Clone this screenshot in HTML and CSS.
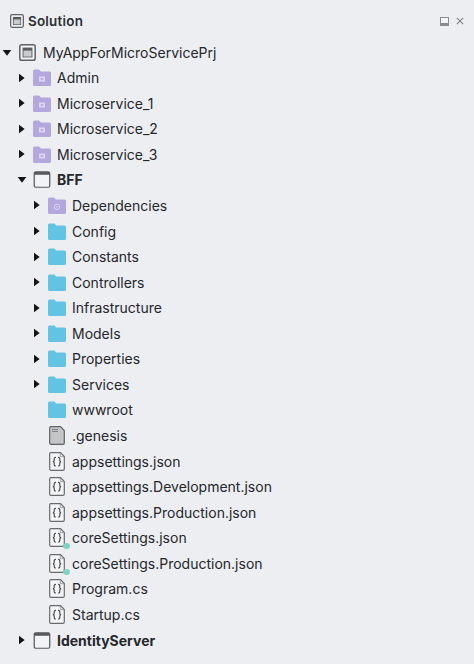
FILE: index.html
```html
<!DOCTYPE html>
<html lang="en">
<head>
<meta charset="utf-8">
<title>Solution</title>
<link rel="stylesheet" href="styles.css">
</head>
<body>
<svg class="defs" width="0" height="0" aria-hidden="true">
  <defs>
    <symbol id="arrow-r" viewBox="0 0 8 12"><path d="M1 .8 L7.8 6 L1 11.2 Z" fill="#151515"/></symbol>
    <symbol id="arrow-d" viewBox="0 0 12 8"><path d="M.8 1 L11.2 1 L6 7.8 Z" fill="#151515"/></symbol>
    <symbol id="solution" viewBox="0 0 17 17"><rect x=".8" y=".8" width="15.4" height="15.4" rx="1.8" fill="#eef0f3" stroke="#626264" stroke-width="1.5"/><rect x="3.6" y="3.6" width="9.8" height="9.8" fill="#5c5c5e"/><rect x="4.5" y="6.6" width="8" height="6" fill="#c8c9cb"/></symbol>
    <symbol id="project" viewBox="0 0 18 18"><rect x=".8" y=".8" width="16.4" height="16.4" rx="1.6" fill="#f2f3f5" stroke="#59595b" stroke-width="1.3"/><rect x="1" y="1" width="16" height="3" fill="#59595b"/></symbol>
    <symbol id="folder-p" viewBox="0 0 18 17"><path d="M0 2 Q0 0.5 1.5 0.5 H6 L8 2.5 H16.5 Q18 2.5 18 4 V15.5 Q18 17 16.5 17 H1.5 Q0 17 0 15.5 Z" fill="#b3a7dd"/><rect x="6" y="7.5" width="6" height="5" fill="#dcd6f0"/><rect x="7.5" y="9.4" width="3" height="1.1" fill="#a598d6"/></symbol>
    <symbol id="folder-dep" viewBox="0 0 18 17"><path d="M0 2 Q0 0.5 1.5 0.5 H6 L8 2.5 H16.5 Q18 2.5 18 4 V15.5 Q18 17 16.5 17 H1.5 Q0 17 0 15.5 Z" fill="#b3a7dd"/><circle cx="9" cy="9.8" r="2.7" fill="none" stroke="#dcd6f0" stroke-width="1"/><circle cx="9" cy="9.8" r=".8" fill="#dcd6f0"/></symbol>
    <symbol id="folder-b" viewBox="0 0 18 17"><path d="M0 2 Q0 0.5 1.5 0.5 H6.5 L8 2.5 H16.5 Q18 2.5 18 4 V15.5 Q18 17 16.5 17 H1.5 Q0 17 0 15.5 Z" fill="#63c3e2"/></symbol>
    <symbol id="file-code" viewBox="0 0 16 19"><path d="M1.8 .7 H11.5 L15.3 4.5 V17 Q15.3 18.3 14 18.3 H2 Q.7 18.3 .7 17 V2 Q.7 .7 1.8 .7 Z" fill="#f4f5f7" stroke="#6a6a6c" stroke-width="1.2"/><path d="M11.3 .9 V4.7 H15" fill="none" stroke="#8d8d90" stroke-width=".8"/><path d="M6.9 5.4 Q5 5.4 5.2 7.3 V8.5 Q5.2 9.5 3.9 9.7 Q5.2 9.9 5.2 10.9 V12.1 Q5 14 6.9 14 M9.1 5.4 Q11 5.4 10.8 7.3 V8.5 Q10.8 9.5 12.1 9.7 Q10.8 9.9 10.8 10.9 V12.1 Q11 14 9.1 14" fill="none" stroke="#3f3f41" stroke-width="1.1"/></symbol>
    <symbol id="file-text" viewBox="0 0 16 19"><path d="M1.8 .7 H11.5 L15.3 4.5 V17 Q15.3 18.3 14 18.3 H2 Q.7 18.3 .7 17 V2 Q.7 .7 1.8 .7 Z" fill="#c4c5c7" stroke="#626264" stroke-width="1.2"/><path d="M3 3.5 H9 M3 5.5 H9" stroke="#707073" stroke-width=".8"/></symbol>
  </defs>
</svg>
<main class="panel">
  <header class="title-bar">
    <span class="title-left">
      <svg class="ic-title"><use href="#solution"/></svg>
      <span class="title">Solution</span>
    </span>
    <span class="title-actions">
      <svg class="ic-min" viewBox="0 0 9 9"><rect x=".5" y=".5" width="8" height="8" fill="#f3f4f6" stroke="#8a8b8e"/><rect x=".5" y="6" width="8" height="2.5" fill="#8a8b8e"/></svg>
      <svg class="ic-close" viewBox="0 0 8 8"><path d="M.8 .8 L7.2 7.2 M7.2 .8 L.8 7.2" stroke="#85868a" stroke-width="1.2"/></svg>
    </span>
  </header>
  <ul class="tree">
    <li class="row l0"><svg class="tw-d"><use href="#arrow-d"/></svg><svg class="ic ic-sln"><use href="#solution"/></svg><span>MyAppForMicroServicePrj</span></li>
    <li class="row l1"><svg class="tw"><use href="#arrow-r"/></svg><svg class="ic"><use href="#folder-p"/></svg><span>Admin</span></li>
    <li class="row l1"><svg class="tw"><use href="#arrow-r"/></svg><svg class="ic"><use href="#folder-p"/></svg><span>Microservice_1</span></li>
    <li class="row l1"><svg class="tw"><use href="#arrow-r"/></svg><svg class="ic"><use href="#folder-p"/></svg><span>Microservice_2</span></li>
    <li class="row l1"><svg class="tw"><use href="#arrow-r"/></svg><svg class="ic"><use href="#folder-p"/></svg><span>Microservice_3</span></li>
    <li class="row l1 bold"><svg class="tw-d"><use href="#arrow-d"/></svg><svg class="ic"><use href="#project"/></svg><span>BFF</span></li>
    <li class="row l2"><svg class="tw"><use href="#arrow-r"/></svg><svg class="ic"><use href="#folder-dep"/></svg><span>Dependencies</span></li>
    <li class="row l2"><svg class="tw"><use href="#arrow-r"/></svg><svg class="ic"><use href="#folder-b"/></svg><span>Config</span></li>
    <li class="row l2"><svg class="tw"><use href="#arrow-r"/></svg><svg class="ic"><use href="#folder-b"/></svg><span>Constants</span></li>
    <li class="row l2"><svg class="tw"><use href="#arrow-r"/></svg><svg class="ic"><use href="#folder-b"/></svg><span>Controllers</span></li>
    <li class="row l2"><svg class="tw"><use href="#arrow-r"/></svg><svg class="ic"><use href="#folder-b"/></svg><span>Infrastructure</span></li>
    <li class="row l2"><svg class="tw"><use href="#arrow-r"/></svg><svg class="ic"><use href="#folder-b"/></svg><span>Models</span></li>
    <li class="row l2"><svg class="tw"><use href="#arrow-r"/></svg><svg class="ic"><use href="#folder-b"/></svg><span>Properties</span></li>
    <li class="row l2"><svg class="tw"><use href="#arrow-r"/></svg><svg class="ic"><use href="#folder-b"/></svg><span>Services</span></li>
    <li class="row l2"><i class="tw-gap"></i><svg class="ic"><use href="#folder-b"/></svg><span>wwwroot</span></li>
    <li class="row l2"><i class="tw-gap"></i><svg class="ic ic-file"><use href="#file-text"/></svg><span>.genesis</span></li>
    <li class="row l2"><i class="tw-gap"></i><svg class="ic ic-file"><use href="#file-code"/></svg><span>appsettings.json</span></li>
    <li class="row l2"><i class="tw-gap"></i><svg class="ic ic-file"><use href="#file-code"/></svg><span>appsettings.Development.json</span></li>
    <li class="row l2"><i class="tw-gap"></i><svg class="ic ic-file"><use href="#file-code"/></svg><span>appsettings.Production.json</span></li>
    <li class="row l2"><i class="tw-gap"></i><span class="badged"><svg class="ic ic-file"><use href="#file-code"/></svg><i class="badge"></i></span><span>coreSettings.json</span></li>
    <li class="row l2"><i class="tw-gap"></i><span class="badged"><svg class="ic ic-file"><use href="#file-code"/></svg><i class="badge"></i></span><span>coreSettings.Production.json</span></li>
    <li class="row l2"><i class="tw-gap"></i><svg class="ic ic-file"><use href="#file-code"/></svg><span>Program.cs</span></li>
    <li class="row l2"><i class="tw-gap"></i><svg class="ic ic-file"><use href="#file-code"/></svg><span>Startup.cs</span></li>
    <li class="row l1 bold"><svg class="tw"><use href="#arrow-r"/></svg><svg class="ic"><use href="#project"/></svg><span>IdentityServer</span></li>
  </ul>
</main>
</body>
</html>
```
FILE: styles.css
```css
* { box-sizing: border-box; }
html, body { margin: 0; height: 100%; }
body {
  background: #eceef2;
  color: #26272a;
  font-family: Inter, "Liberation Sans", sans-serif;
  overflow: hidden;
}
.defs { position: absolute; }
.panel { width: 474px; height: 664px; display: flex; flex-direction: column; }
.title-bar {
  height: 39.3px;
  padding: 3px 10px 0 10px;
  display: flex;
  align-items: center;
  justify-content: space-between;
}
.title-left { display: flex; align-items: center; gap: 4px; }
.ic-title { width: 14px; height: 14px; }
.title { font-size: 13.4px; font-weight: 600; letter-spacing: .25px; color: #2e2f32; }
.title-actions { display: flex; align-items: center; gap: 7px; margin-top: 0; }
.ic-min { width: 9px; height: 9px; }
.ic-close { width: 8px; height: 8px; }
.tree { list-style: none; margin: 0; padding: 0; }
.row {
  height: 25.57px;
  display: flex;
  align-items: center;
  font-size: 14px;
  white-space: nowrap;
}
.l0 { padding-left: 3px; }
.l1 { padding-left: 18px; }
.l2 { padding-left: 33px; }
.bold { font-weight: 700; }
.tw { width: 7px; height: 10px; margin-right: 8px; flex: none; }
.tw-d { width: 10px; height: 7px; margin-right: 6px; margin-left: -1px; flex: none; }
.tw-gap { width: 7px; margin-right: 8px; flex: none; }
.ic { width: 18px; height: 17px; margin-right: 6px; flex: none; }
.ic-sln { width: 17px; height: 17px; margin-right: 7px; margin-left: 1px; }
.ic-file { width: 16px; height: 19px; margin-left: 1px; margin-right: 7px; }
.badged { position: relative; display: flex; flex: none; }
.badge {
  position: absolute;
  left: 14.5px;
  top: 15px;
  width: 7px;
  height: 6px;
  border-radius: 50%;
  background: #7fd3c4;
}
```
